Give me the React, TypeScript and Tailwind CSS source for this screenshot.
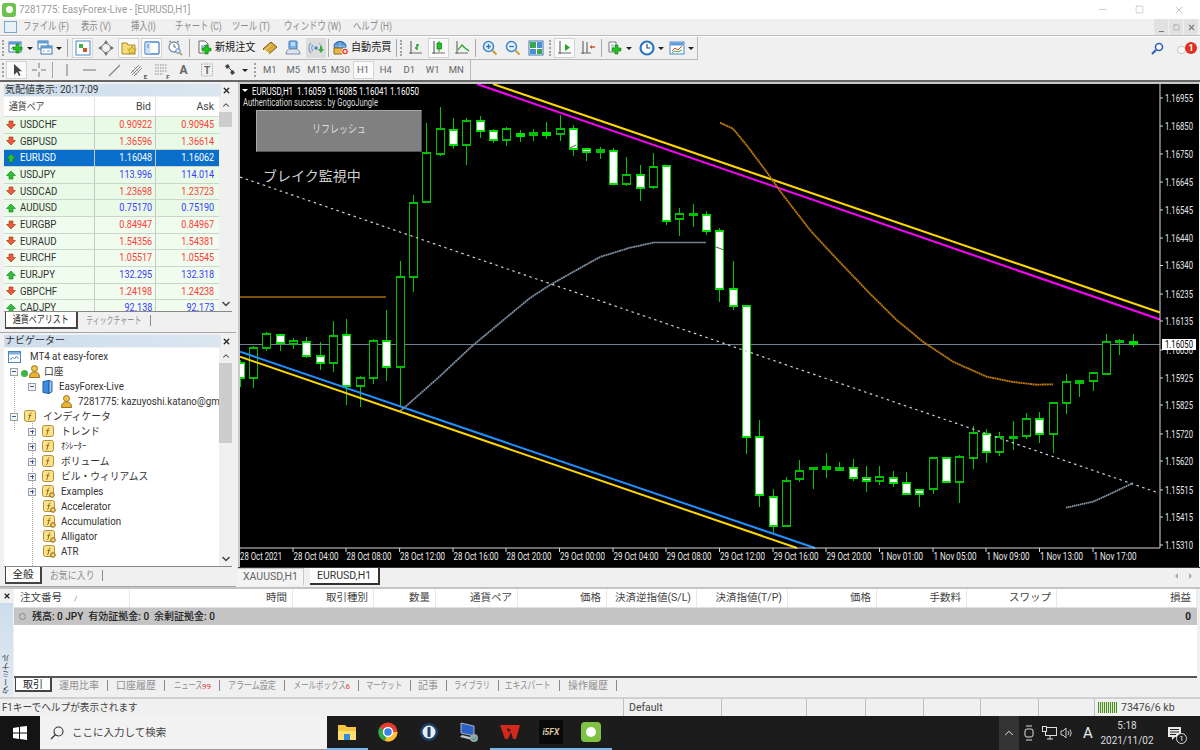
import React from "react";
import { ChevronUp, Minus, Square, X } from "lucide-react";

const uiFont = "font-['Roboto','Noto_Sans_CJK_JP',sans-serif]";

// i -> high, body top, body bottom, low, bearish (white body)
const candles: [number, number, number, number, number][] = [
  [360, 363, 378, 387, 1], [346, 348, 378, 388, 0], [332, 334, 348, 351, 0], [335, 335, 343, 351, 1],
  [338, 341, 344, 349, 0], [337, 342, 356, 358, 1], [342, 356, 363, 370, 1], [321, 336, 363, 372, 0],
  [319, 335, 386, 405, 1], [376, 378, 386, 407, 0], [339, 341, 378, 384, 0], [310, 341, 367, 381, 1],
  [261, 277, 367, 407, 0], [195, 203, 277, 292, 0], [123, 153, 202, 202, 0], [107, 129, 154, 156, 0],
  [118, 130, 145, 149, 1], [118, 121, 145, 165, 0], [116, 121, 131, 138, 1], [129, 131, 140, 143, 1],
  [127, 129, 140, 146, 0], [130, 134, 136, 142, 1], [129, 133, 135, 141, 0], [122, 133, 135, 139, 1],
  [115, 129, 134, 141, 0], [125, 129, 149, 156, 1], [149, 149, 152, 161, 1], [147, 150, 152, 159, 0],
  [148, 151, 184, 184, 1], [157, 175, 184, 186, 0], [165, 175, 188, 201, 1], [153, 167, 187, 189, 0],
  [165, 166, 221, 225, 1], [208, 214, 219, 236, 0], [204, 214, 215, 227, 0], [211, 215, 231, 235, 1],
  [228, 231, 289, 302, 1], [261, 289, 306, 310, 1], [306, 306, 437, 454, 1], [420, 437, 495, 507, 1],
  [489, 497, 526, 533, 1], [477, 481, 526, 527, 0], [460, 471, 479, 482, 0], [467, 468, 469, 489, 0],
  [453, 467, 469, 478, 0], [462, 468, 470, 471, 0], [459, 468, 478, 481, 1], [466, 478, 481, 492, 1],
  [466, 477, 481, 485, 0], [471, 478, 483, 487, 1], [472, 483, 494, 495, 1], [490, 490, 494, 507, 1],
  [457, 458, 489, 494, 0], [458, 458, 482, 483, 1], [455, 457, 482, 503, 0], [426, 433, 458, 469, 0],
  [429, 434, 452, 463, 1], [432, 437, 452, 456, 0], [421, 437, 438, 450, 0], [413, 419, 436, 439, 0],
  [412, 419, 434, 443, 1], [403, 403, 434, 453, 0], [374, 382, 403, 414, 0], [380, 381, 383, 397, 0],
  [373, 373, 381, 391, 0], [334, 342, 374, 375, 0], [339, 341, 342, 355, 0], [334, 342, 344, 347, 1],
];

const prices: [string, number][] = [
  ["1.16955", 98], ["1.16850", 126], ["1.16750", 154], ["1.16645", 182], ["1.16545", 210], ["1.16440", 238],
  ["1.16340", 265.5], ["1.16235", 294], ["1.16135", 321], ["1.16030", 350], ["1.15925", 378], ["1.15825", 405],
  ["1.15720", 434], ["1.15620", 461], ["1.15515", 490], ["1.15415", 517], ["1.15310", 545],
];

const times: [string, number, number][] = [
  ["28 Oct 2021", 239.6, 42], ["28 Oct 04:00", 293, 45], ["28 Oct 08:00", 346, 45], ["28 Oct 12:00", 399.6, 45], ["28 Oct 16:00", 453, 45],
  ["28 Oct 20:00", 506, 45], ["29 Oct 00:00", 559.5, 45], ["29 Oct 04:00", 613, 45], ["29 Oct 08:00", 666, 45], ["29 Oct 12:00", 719.5, 45],
  ["29 Oct 16:00", 773, 45], ["29 Oct 20:00", 826, 45], ["1 Nov 01:00", 879.5, 43], ["1 Nov 05:00", 933, 43], ["1 Nov 09:00", 986, 43],
  ["1 Nov 13:00", 1039.5, 43], ["1 Nov 17:00", 1093, 43],
];

const quotes: [string, string, string, number][] = [
  ["USDCHF", "0.90922", "0.90945", 0], ["GBPUSD", "1.36596", "1.36614", 0], ["EURUSD", "1.16048", "1.16062", 1],
  ["USDJPY", "113.996", "114.014", 1], ["USDCAD", "1.23698", "1.23723", 0], ["AUDUSD", "0.75170", "0.75190", 1],
  ["EURGBP", "0.84947", "0.84967", 0], ["EURAUD", "1.54356", "1.54381", 0], ["EURCHF", "1.05517", "1.05545", 0],
  ["EURJPY", "132.295", "132.318", 1], ["GBPCHF", "1.24198", "1.24238", 0], ["CADJPY", "92.138", "92.173", 1],
];

const termCols: [string, string][] = [
  ["注文番号", "w-[116px] text-left pl-[6px]"], ["時間", "w-[163px] text-right pr-[5px]"], ["取引種別", "w-[81px] text-right pr-[5px]"],
  ["数量", "w-[62px] text-right pr-[5px]"], ["通貨ペア", "w-[82px] text-right pr-[5px]"], ["価格", "w-[89px] text-right pr-[5px]"],
  ["決済逆指値(S/L)", "w-[90px] text-right pr-[5px]"], ["決済指値(T/P)", "w-[91px] text-right pr-[5px]"], ["価格", "w-[89px] text-right pr-[5px]"],
  ["手数料", "w-[90px] text-right pr-[5px]"], ["スワップ", "w-[90px] text-right pr-[5px]"], ["損益", "flex-1 text-right pr-[5px]"],
];

const Ic = ({ children, s = 16 }: { children: React.ReactNode; s?: number }) => (
  <svg width={s} height={s} viewBox="0 0 16 16" className="shrink-0">{children}</svg>
);

const Plus = ({ x = 8, y = 8 }: { x?: number; y?: number }) => (
  <path d={`M${x + 2} ${y}h3v3h3v3h-3v3h-3v-3h-3v-3h3z`} fill="#22c322" stroke="#0c7a0c" strokeWidth="0.6" />
);
const Win = ({ x = 1, y = 2, w = 12, h = 10 }: { x?: number; y?: number; w?: number; h?: number }) => (
  <g>
    <rect x={x} y={y} width={w} height={h} fill="#fff" stroke="#3f77b5" />
    <rect x={x} y={y} width={w} height={2.5} fill="#5d9ad6" />
  </g>
);
const Axis = () => <path d="M3 1v13M1 13h13M7 1v0" stroke="#6c6c6c" strokeWidth="1.2" fill="none" />;

const icons: Record<string, React.ReactNode> = {
  newChart: <Ic><Win /><path d="M3 9l2-2 2 1" stroke="#888" fill="none" /><Plus x={6} y={4} /></Ic>,
  profiles: <Ic><Win x={1} y={1} w={10} h={8} /><Win x={4} y={6} w={11} h={8} /><path d="M6 11h2M10 11h3" stroke="#8ab" /></Ic>,
  market: <Ic><rect x="1" y="1" width="14" height="14" fill="#fff" stroke="#4a86c5" /><rect x="4" y="4" width="4" height="4" fill="#3cb44a" /><rect x="8" y="8" width="4" height="4" fill="#d6532a" /></Ic>,
  move: <Ic><circle cx="8" cy="8" r="4.5" fill="none" stroke="#666" /><path d="M8 0l2 3H6zM8 16l-2-3h4zM0 8l3-2v4zM16 8l-3 2V6z" fill="#777" /></Ic>,
  nav: <Ic><path d="M1 3h5l1 2h7v9H1z" fill="#f7dd7a" stroke="#a98a2c" /><path d="M11 6l1.4 3 3 .3-2.3 2 .8 3-2.9-1.7L8 14.3l.8-3-2.3-2 3-.3z" fill="#f2cf46" stroke="#9b8128" strokeWidth=".6" /></Ic>,
  term: <Ic><rect x="1" y="2" width="14" height="12" rx="1" fill="#fff" stroke="#4a86c5" strokeWidth="1.3" /><rect x="1.5" y="2.5" width="5" height="11" fill="#cfe0f2" /><path d="M3 5h2M3 7h2" stroke="#4a86c5" /></Ic>,
  tester: <Ic><circle cx="7" cy="7" r="5" fill="#fff" stroke="#7a8fa8" strokeWidth="1.3" /><path d="M7 4v3h2" stroke="#667" fill="none" /><path d="M2 2l2-1M12 2l-2-1" stroke="#667" /><circle cx="11" cy="11" r="2.3" fill="#dfeaf5" stroke="#5585b5" /><path d="M13 13l2 2" stroke="#b38a2c" strokeWidth="1.6" /></Ic>,
  order: <Ic><path d="M2 1h6l3 3v9H2z" fill="#fff" stroke="#666" /><path d="M4 6h5M4 8h4" stroke="#4a86c5" /><Plus x={6} y={5} /></Ic>,
  book: <Ic><path d="M1 9l8-7 6 5-8 7z" fill="#d7a83a" stroke="#7b5a17" /><path d="M3 10l6-5" stroke="#f3d98a" /><path d="M2 10l5 4" stroke="#fff" strokeWidth="1.2" /></Ic>,
  vps: <Ic><rect x="4" y="1" width="8" height="8" rx="1" fill="#79b3e8" stroke="#3f77b5" /><path d="M6 3h4M6 5h4" stroke="#fff" /><path d="M1 14c0-3 2-5 4-5h6c2 0 4 2 4 5z" fill="#dbe4ee" stroke="#7d8fa3" /></Ic>,
  signal: <Ic><path d="M3 13a7 7 0 0 1 0-10M5 11a4.5 4.5 0 0 1 0-6" stroke="#7aa3c9" fill="none" strokeWidth="1.2" /><circle cx="8" cy="8" r="1.8" fill="#4a86c5" /><path d="M11 3a7 7 0 0 1 3 6" stroke="#7aa3c9" fill="none" /><path d="M10 9h2V6h2v3h2l-3 4z" fill="#37ad37" /></Ic>,
  auto: <Ic><ellipse cx="7" cy="6" rx="6" ry="4.5" fill="#4f94d4" stroke="#245d96" /><path d="M1.5 6h11M7 2v8" stroke="#bcd9f2" strokeWidth=".7" /><path d="M1 8h8v6H1z" fill="#e8b84a" stroke="#8c6a1c" /><circle cx="12" cy="11.5" r="3.4" fill="#e23a2c" stroke="#fff" /><rect x="10.7" y="10.3" width="2.6" height="2.4" fill="#fff" /></Ic>,
  bars: <Ic><Axis /><path d="M9 10V4M7 8h2M9 5h2" stroke="#1f9d1f" strokeWidth="1.4" fill="none" /></Ic>,
  candle: <Ic><Axis /><path d="M8 1v11" stroke="#1f9d1f" /><rect x="6" y="3" width="4.5" height="6" fill="#22c322" stroke="#0c7a0c" strokeWidth=".7" /></Ic>,
  line: <Ic><Axis /><path d="M4 10l4-5 3 3 4 3" stroke="#1f9d1f" strokeWidth="1.2" fill="none" /></Ic>,
  zoomIn: <Ic><circle cx="6.5" cy="6.5" r="5" fill="#e6f1fb" stroke="#3a86d0" strokeWidth="1.5" /><path d="M4 6.5h5M6.5 4v5" stroke="#3a76b5" strokeWidth="1.3" /><path d="M10.5 10.5l4 4" stroke="#c9a23b" strokeWidth="2.2" /></Ic>,
  zoomOut: <Ic><circle cx="6.5" cy="6.5" r="5" fill="#e6f1fb" stroke="#3a86d0" strokeWidth="1.5" /><path d="M4 6.5h5" stroke="#3a76b5" strokeWidth="1.3" /><path d="M10.5 10.5l4 4" stroke="#c9a23b" strokeWidth="2.2" /></Ic>,
  tile: <Ic><rect x="1" y="1" width="14" height="14" fill="#fff" stroke="#3f77b5" /><rect x="2" y="2" width="6" height="6" fill="#3aa84a" /><rect x="9" y="2" width="5" height="6" fill="#4a8fd8" /><rect x="2" y="9" width="6" height="5" fill="#4a8fd8" /><rect x="9" y="9" width="5" height="5" fill="#3aa84a" /></Ic>,
  scroll: <Ic><Axis /><path d="M8 4l5 3.5L8 11z" fill="#27a527" /></Ic>,
  shift: <Ic><path d="M3 1v13M1 13h10M7 2v11" stroke="#6c6c6c" strokeWidth="1.2" fill="none" /><path d="M10 7h5" stroke="#c9502a" strokeWidth="1.4" /><path d="M12 5l-2 2 2 2z" fill="#c9502a" /></Ic>,
  indic: <Ic><path d="M2 2h7v10H2z" fill="#fff" stroke="#777" /><path d="M4 5h3M4 7h3" stroke="#8ab" /><Plus x={6} y={5} /></Ic>,
  clock: <Ic><circle cx="8" cy="8" r="6.5" fill="#fff" stroke="#2b76c0" strokeWidth="2.2" /><path d="M8 4v4h3.5" stroke="#1d4e80" strokeWidth="1.2" fill="none" /></Ic>,
  tpl: <Ic><rect x="1" y="2" width="14" height="12" fill="#fff" stroke="#4a86c5" /><rect x="1.5" y="2.5" width="13" height="3" fill="#5d9ad6" /><path d="M3 11l3-3 3 2 4-4" stroke="#c9502a" fill="none" /><path d="M3 13l3-2 3 1 4-2" stroke="#3aa84a" fill="none" /></Ic>,
  cursor: <Ic><path d="M5 2v11l3-3 2 4 1.5-.8-2-3.9h3.5z" fill="#444" /></Ic>,
  cross: <Ic><path d="M8 1v5M8 10v5M1 8h5M10 8h5" stroke="#777" /></Ic>,
  vline: <Ic><path d="M8 2v12" stroke="#888" strokeWidth="1.2" /></Ic>,
  hline: <Ic><path d="M1 8h13" stroke="#888" strokeWidth="1.2" /></Ic>,
  trend: <Ic><path d="M3 14L14 3" stroke="#888" strokeWidth="1.2" /></Ic>,
  fibE: <Ic><path d="M2 11l8-8M3 13l9-9M5 14l8-8" stroke="#777" strokeWidth=".9" /><path d="M5 5l6 6M3 8l5 5" stroke="#777" strokeWidth=".7" strokeDasharray="1 1" /></Ic>,
  fibF: <Ic><path d="M2 3h12M2 6h12M2 9h12M2 12h8" stroke="#888" strokeDasharray="1.5 1" /></Ic>,
  boxT: <Ic><rect x="2.5" y="2" width="11" height="12" fill="none" stroke="#aaa" strokeDasharray="1.5 1" /></Ic>,
  shapes: <Ic><path d="M2 4l3-2 2 3-3 2zM7 10l3-2 2 3-3 2z" fill="#444" /><path d="M6 6l3 3" stroke="#444" /></Ic>,
  mt4: <svg width="13" height="12" viewBox="0 0 13 12" className="shrink-0"><rect x=".5" y=".5" width="12" height="11" fill="#fff" stroke="#4a86c5" /><rect x="1" y="1" width="11" height="2.5" fill="#7fb0e0" /><path d="M2.500 9l2-3 2 2 2-3 2 3" stroke="#5d8fc4" fill="none" /></svg>,
};

const FIcon = ({ gear }: { gear?: boolean }) => (
  <svg width="13" height="13" viewBox="0 0 13 13" className="shrink-0">
    <rect x=".5" y=".5" width="11" height="11" rx="2" fill="#fbe28a" stroke="#b48f3a" />
    <path d="M7.5 3C6 3 6 4 5.7 6L5.2 9c-.1.6-.5.7-1 .6M4.3 5.6h3" stroke="#8a6414" fill="none" strokeWidth=".9" />
    {gear && <circle cx="10" cy="10" r="2.3" fill="#f4cf6a" stroke="#8a6414" />}
  </svg>
);
const Person = () => (
  <svg width="13" height="13" viewBox="0 0 13 13" className="shrink-0">
    <circle cx="6.5" cy="3.5" r="3" fill="#f0c445" stroke="#98741c" />
    <path d="M1.5 12.5c0-4 2-5.5 5-5.5s5 1.500 5 5.500z" fill="#e7b532" stroke="#98741c" />
  </svg>
);
const Server = () => (
  <svg width="11" height="14" viewBox="0 0 11 14" className="shrink-0">
    <path d="M1 1.500L7 .5v13l-6-1z" fill="#3a8de0" stroke="#1f5fa3" />
    <path d="M7 .5l3 1v10l-3 2z" fill="#9dc9f2" stroke="#1f5fa3" />
  </svg>
);
const TreeBox = ({ open }: { open?: boolean }) => (
  <span className="w-[8px] h-[8px] border border-[#9aa0a8] bg-[#f4f4f4] flex items-center justify-center shrink-0 relative">
    <span className="block w-[4px] h-px bg-[#3a5a9a]" />
    {!open && <span className="absolute block h-[4px] w-px bg-[#3a5a9a]" />}
  </span>
);

const Caret = () => <span className="ml-[3px] w-0 h-0 border-x-[3px] border-x-transparent border-t-[3px] border-t-[#222] shrink-0" />;
const Sep = ({ w = "w-[6px]" }: { w?: string }) => (
  <div className={`${w} h-full flex justify-center py-[2px] shrink-0`}><span className="w-[2px] h-full border-l border-[#a8a8a8] border-r-white" /></div>
);
const Grip = () => (
  <div className="w-[6px] h-full flex justify-center py-[3px] shrink-0"><span className="w-[2px] h-full border-l-2 border-dotted border-[#a0a0a0]" /></div>
);
const Btn = ({ w, on, gray, children }: { w: string; on?: boolean; gray?: boolean; children: React.ReactNode }) => (
  <div className={`${w} h-full flex items-center justify-center shrink-0 py-[1px]`}>
    <div className={`h-full px-[2px] flex items-center justify-center ${on ? "bg-[#fafafa] border border-[#d4d4d4] w-[21px]" : ""} ${gray ? "bg-[#dcdcdc]" : ""}`}>{children}</div>
  </div>
);

const PanelTitle = ({ label }: { label: string }) => (
  <div className="h-[12px] flex items-center pl-[4px] pr-[4px] shrink-0">
    <div className="w-[217px] h-full bg-gradient-to-r from-[#cddcec] to-[#dbe6f0] text-[10px] leading-[12px] text-[#333] pl-[1px] whitespace-nowrap">{label}</div>
    <div className="flex-1 flex justify-center"><X size={9} strokeWidth={3.5} color="#222" /></div>
  </div>
);

const VScroll = ({ thumb }: { thumb: string }) => (
  <div className="w-[13px] h-full bg-[#f0f0f0] flex flex-col items-center shrink-0 relative">
    <ChevronUp size={10} strokeWidth={2.5} color="#444" className="mt-[3px]" />
    <div className={`${thumb} w-full bg-[#cdcdcd] mt-[2px]`} />
    <svg width="10" height="10" viewBox="0 0 10 10" className="absolute bottom-[2px]"><path d="M1.500 3l3.500 3.500L8.500 3" fill="none" stroke="#444" strokeWidth="1.500" /></svg>
  </div>
);

const Chart = () => {
  const px = (i: number) => Math.round(239.6 + 13.33 * i);
  return (
    <div className="relative w-[961px] h-[485px] bg-black border-l-2 border-t-2 border-[#c8c8c8] shrink-0 overflow-hidden">
      <svg width="961" height="485" viewBox="240 84 961 485" className={`absolute left-0 top-0 ${uiFont}`}>
        <path d="M240 344.500H1160" stroke="#708090" strokeWidth="1" />
        <path d="M240 297H386" stroke="#a8690c" strokeWidth="1.300" />
        <g shapeRendering="crispEdges">
          {candles.map((c, i) => {
            const x = px(i);
            const half = 4;
            return (
              <g key={i}>
                <path d={`M${x + 0.5} ${c[0]}V${c[3]}`} stroke="#00c800" strokeWidth="1" />
                <rect x={x - half + 0.5} y={c[1]} width={half * 2} height={Math.max(c[2] - c[1], 1)} fill={c[4] ? "#fff" : "#000"} stroke={c[4] ? "#00e000" : "#00c000"} strokeWidth="1.300" />
              </g>
            );
          })}
        </g>
        <path d="M570 148l6-3M716 247l8 3" stroke="#555" strokeWidth="1" />
        <path d="M240 177L1158 492.700" stroke="#d0d0d0" strokeWidth="1.200" strokeDasharray="2.500 3.500" />
        <path d="M493 84L1160 312.500" stroke="#ffd700" strokeWidth="2" />
        <path d="M477 84L1160 319.500" stroke="#ff00ff" strokeWidth="2" />
        <path d="M240 351.700L815 548" stroke="#1e90ff" strokeWidth="2" />
        <path d="M240 356.700L797 548" stroke="#ffd700" strokeWidth="2" />
        <path d="M400 411L405 407L438 378L471 347L501 322L530 298L550 285L573 272L600 257L630 247.700L653 242.700" stroke="#7b8fa0" strokeWidth="1.800" fill="none" strokeDasharray="2 .4" />
        <path d="M653 242.500H706" stroke="#708090" strokeWidth="1.500" />
        <path d="M1066 507.700L1093 501.700L1110 494L1133 483" stroke="#8a9ba8" strokeWidth="1.800" fill="none" strokeDasharray="1.500 .5" />
        <path d="M720 122.700L733 128.700L746.700 145.300L766.700 172L783 195L810 230L833 255L870 293.700L896.700 320L923 341.700L953 361.700L986.700 376.700L1013 382L1036.700 384.700L1053 384.300" stroke="#b8760b" strokeWidth="1.900" fill="none" strokeDasharray="2 .4" />
        <path d="M1160 84V548H240" stroke="#d8d8d8" strokeWidth="1" fill="none" />
        {prices.map(([t, y]) => (
          <g key={t}>
            <path d={`M1160 ${y}h3`} stroke="#d8d8d8" />
            <text x="1165" y={y + 3.500} fill="#e8e8e8" fontSize="10" textLength={28} lengthAdjust="spacingAndGlyphs">{t}</text>
          </g>
        ))}
        {times.map(([t, x, w]) => (
          <g key={t}>
            <path d={`M${x} 548v4`} stroke="#d8d8d8" />
            <text x={x + 0.500} y="560" fill="#e8e8e8" fontSize="10" textLength={w} lengthAdjust="spacingAndGlyphs">{t}</text>
          </g>
        ))}
        <rect x="1162" y="339" width="34" height="11" fill="#fff" />
        <text x="1165" y="348" fill="#000" fontSize="10" textLength={28} lengthAdjust="spacingAndGlyphs">1.16050</text>
        <path d="M242 89h6l-3 3z" fill="#fff" />
        <text x="252" y="94.500" fill="#fff" fontSize="10" textLength={167} lengthAdjust="spacingAndGlyphs" xmlSpace="preserve">EURUSD,H1  1.16059 1.16085 1.16041 1.16050</text>
        <text x="243" y="105.500" fill="#ddd" fontSize="10" textLength={135} lengthAdjust="spacingAndGlyphs">Authentication success : by GogoJungle</text>
      </svg>
      <div className="absolute left-[16px] top-[26px] w-[166px] h-[42px] bg-[#808080] border border-t-[#a8a8a8] border-l-[#a8a8a8] border-b-[#555] border-r-[#555] flex items-center justify-center text-[11px] text-[#dcdcdc] pb-[1px]">
        <span className="inline-block scale-x-[.82]">リフレッシュ</span>
      </div>
      <div className="absolute left-[23px] top-[82px] text-[14px] leading-[20px] text-[#cfcfcf] whitespace-nowrap">ブレイク監視中</div>
    </div>
  );
};

const TabLabel = ({ on, w, sq = "", children }: { on?: boolean; w: string; sq?: string; children: React.ReactNode }) => (
  <div className={`${w} h-full shrink-0 flex items-center justify-center whitespace-nowrap ${on ? "bg-white border-r-2 border-b-2 border-[#444] border-l text-[#222]" : "text-[#8e8e8e]"}`}>
    <span className={`inline-block ${sq}`}>{children}</span>
  </div>
);
const TabSep = () => <span className="w-px h-[11px] bg-[#888] shrink-0" />;

const termTabs: [string, string, string, string?][] = [
  ["運用比率", "w-[56px]", ""], ["口座履歴", "w-[57px]", ""], ["ニュース", "w-[55px]", "scale-x-[.72]", "99"], ["アラーム設定", "w-[65px]", "scale-x-[.8]"],
  ["メールボックス", "w-[74px]", "scale-x-[.75]", "6"], ["マーケット", "w-[52px]", "scale-x-[.72]"], ["記事", "w-[36px]", ""], ["ライブラリ", "w-[52px]", "scale-x-[.72]"],
  ["エキスパート", "w-[61px]", "scale-x-[.77]"], ["操作履歴", "w-[57px]", ""],
];

type NavRow = { label: string; icon: React.ReactNode; pad: string; box?: "open" | "closed"; small?: boolean; gap: string };
const navRows: NavRow[] = [
  { label: "MT4 at easy-forex", icon: icons.mt4, pad: "pl-[4px]", gap: "gap-[9px]" },
  { label: "口座", icon: <span className="flex shrink-0"><span className="w-[7px] h-[7px] rounded-full bg-[#39b54a] mt-[5px]" /><Person /></span>, pad: "pl-[6px]", box: "open", gap: "gap-[3px]" },
  { label: "EasyForex-Live", icon: <Server />, pad: "pl-[24px]", box: "open", gap: "gap-[6px]" },
  { label: "7281775: kazuyoshi.katano@gm", icon: <Person />, pad: "pl-[56px]", gap: "gap-[5px]" },
  { label: "インディケータ", icon: <FIcon />, pad: "pl-[6px]", box: "open", gap: "gap-[6px]" },
  { label: "トレンド", icon: <FIcon />, pad: "pl-[24px]", box: "closed", gap: "gap-[6px]" },
  { label: "ｵｼﾚｰﾀｰ", icon: <FIcon />, pad: "pl-[24px]", box: "closed", small: true, gap: "gap-[6px]" },
  { label: "ボリューム", icon: <FIcon />, pad: "pl-[24px]", box: "closed", gap: "gap-[6px]" },
  { label: "ビル・ウィリアムス", icon: <FIcon />, pad: "pl-[24px]", box: "closed", gap: "gap-[6px]" },
  { label: "Examples", icon: <FIcon gear />, pad: "pl-[24px]", box: "closed", gap: "gap-[6px]" },
  { label: "Accelerator", icon: <FIcon gear />, pad: "pl-[39px]", gap: "gap-[5px]" },
  { label: "Accumulation", icon: <FIcon gear />, pad: "pl-[39px]", gap: "gap-[5px]" },
  { label: "Alligator", icon: <FIcon gear />, pad: "pl-[39px]", gap: "gap-[5px]" },
  { label: "ATR", icon: <FIcon gear />, pad: "pl-[39px]", gap: "gap-[5px]" },
];

const Sidebar = () => (
  <div className="w-[236px] h-full flex flex-col shrink-0">
    <div className="h-[251px] flex flex-col pt-[2px] pb-[3px] border-b border-[#a8a8a8]">
      <PanelTitle label="気配値表示: 20:17:09" />
      <div className="flex-1 flex pl-[4px] pr-[4px] min-h-0 pt-[1px]">
        <div className="w-[215px] h-full bg-white overflow-hidden">
          <div className="h-[20px] flex text-[10.500px] text-[#444] border-b border-[#d8d8d8]">
            <div className="w-[91px] pl-[5px] leading-[19px] border-r border-[#e4e4e4]"><span className="inline-block origin-left scale-x-[.84]">通貨ペア</span></div>
            <div className="w-[61px] pr-[4px] text-right leading-[19px] border-r border-[#e4e4e4]">Bid</div>
            <div className="w-[62px] pr-[4px] text-right leading-[19px]">Ask</div>
          </div>
          {quotes.map((q, i) => (
            <div key={q[0]} className={`h-[16.670px] flex items-center border-b border-[#cdd4cd] text-[10.500px] ${i === 2 ? "bg-[#0a6ecb] text-white" : i < 6 ? "bg-[#e9fae6] text-[#333]" : "bg-[#f0fcee] text-[#333]"}`}>
              <div className="w-[91px] h-full flex items-center border-r border-[#c4cbc4]">
                <svg width="10" height="10" viewBox="0 0 10 10" className="ml-[2px] mr-[4px] shrink-0">
                  {q[3] ? <path d="M5 1l4.500 4.500H7V9H3V5.500H.5z" fill="#2fbf3a" stroke="#137a1c" strokeWidth=".6" /> : <path d="M5 9L.5 4.500H3V1h4v3.500h2.500z" fill="#ef5a3a" stroke="#a82a12" strokeWidth=".6" />}
                </svg>
                <span className="inline-block origin-left scale-x-[.92]">{q[0]}</span>
              </div>
              <div className={`w-[61px] h-full flex items-center justify-end pr-[3px] border-r border-[#c4cbc4] ${i === 2 ? "" : q[3] ? "text-[#3a3aff]" : "text-[#ff3a3a]"}`}><span className="inline-block origin-right scale-x-[.86]">{q[1]}</span></div>
              <div className={`w-[62px] h-full flex items-center justify-end pr-[4px] ${i === 2 ? "" : q[3] ? "text-[#3a3aff]" : "text-[#ff3a3a]"}`}><span className="inline-block origin-right scale-x-[.86]">{q[2]}</span></div>
            </div>
          ))}
        </div>
        <VScroll thumb="h-[15px]" />
      </div>
      <div className="h-[18px] flex items-center pl-[1px] mx-[4px] border-t border-[#888] text-[10.500px] shrink-0">
        <TabLabel on w="w-[73px]" sq="scale-x-[.76]">通貨ペアリスト</TabLabel>
        <TabLabel w="w-[72px]" sq="scale-x-[.66]">ティックチャート</TabLabel>
        <TabSep />
      </div>
    </div>
    <div className="flex-1 flex flex-col pt-[2px] pb-[2px] min-h-0 border-b border-[#a8a8a8]">
      <PanelTitle label="ナビゲーター" />
      <div className="flex-1 flex pl-[4px] pr-[4px] min-h-0 pt-[1px]">
        <div className="w-[215px] h-full bg-white overflow-hidden relative pt-[1px]">
          <span className="absolute left-[10px] top-[22px] h-[60px] border-l border-dotted border-[#aaa]" />
          <span className="absolute left-[28px] top-[70px] h-[160px] border-l border-dotted border-[#aaa]" />
          {navRows.map((r) => (
            <div key={r.label} className={`h-[15px] flex items-center text-[10.500px] text-[#333] whitespace-nowrap relative ${r.pad} ${r.gap}`}>
              {r.box && <TreeBox open={r.box === "open"} />}
              {r.icon}
              <span className={`inline-block origin-left scale-x-[.93] ${r.small ? "text-[9px]" : ""}`}>{r.label}</span>
            </div>
          ))}
        </div>
        <VScroll thumb="h-[80px]" />
      </div>
      <div className="h-[18px] flex items-center pl-[1px] mx-[4px] border-t border-[#888] text-[10.500px] shrink-0">
        <TabLabel on w="w-[37px]">全般</TabLabel>
        <TabLabel w="w-[60px]" sq="scale-x-[.85]">お気に入り</TabLabel>
        <TabSep />
      </div>
    </div>
  </div>
);

const menuItems: [string, string][] = [
  ["ファイル (F)", "w-[58px]"], ["表示 (V)", "w-[50px]"], ["挿入(I)", "w-[44px]"], ["チャート (C)", "w-[57px]"],
  ["ツール (T)", "w-[52px]"], ["ウィンドウ (W)", "w-[69px]"], ["ヘルプ (H)", "w-[45px]"],
];

const App = () => (
  <div className={`w-[1200px] h-[750px] overflow-hidden bg-[#f0f0f0] flex flex-col ${uiFont}`}>
    {/* title bar */}
    <div className="h-[19px] bg-white flex items-center shrink-0">
      <span className="w-[14px] h-[14px] ml-[2px] bg-[#6cc24a] rounded-[3px] flex items-center justify-center shrink-0"><span className="w-[7px] h-[7px] bg-white rounded-full" /></span>
      <span className="ml-[3px] text-[11.500px] text-[#9a9a9a] whitespace-nowrap inline-block origin-left scale-x-[.85]">7281775: EasyForex-Live - [EURUSD,H1]</span>
      <div className="ml-auto flex items-center text-[#8a8a8a]">
        <Minus size={11} strokeWidth={1} className="mr-[27px]" />
        <Square size={9} strokeWidth={1} className="mr-[29px]" />
        <X size={12} strokeWidth={1} className="mr-[15px]" />
      </div>
    </div>
    {/* menu bar */}
    <div className="h-[17px] flex items-center shrink-0 text-[11px] text-[#8c8c8c] border-b border-[#bcbcbc]">
      <span className="w-[13px] h-[12px] ml-[4px] border border-[#7aa6d2] bg-[#e8f1fa] shrink-0" />
      <div className="ml-[6px] flex items-center">
        {menuItems.map(([t, w]) => (
          <span key={t} className={`${w} shrink-0 whitespace-nowrap`}><span className="inline-block origin-left scale-x-[.76]">{t}</span></span>
        ))}
      </div>
      <div className="ml-auto h-full flex items-center text-[#7a7a7a]">
        <span className="w-[14px] h-full bg-[#e2e2e2] flex items-end justify-center pb-[3px]"><span className="w-[5px] h-px bg-[#777]" /></span>
        <span className="w-[14px] h-full bg-[#e2e2e2] ml-px flex items-center justify-center"><Square size={7} strokeWidth={1.500} /></span>
        <span className="w-[14px] h-full bg-[#e2e2e2] ml-px mr-[2px] flex items-center justify-center"><X size={9} strokeWidth={3} /></span>
      </div>
    </div>
    {/* toolbar 1 */}
    <div className="h-[24px] flex items-center shrink-0 border-t border-white">
      <div className="h-full flex items-center border-b border-r border-[#b8b8b8] pr-[1px] text-[11px] text-[#222]">
        <Grip />
        <Btn w="w-[28px]"><div className="flex items-center">{icons.newChart}<Caret /></div></Btn>
        <Btn w="w-[30px]"><div className="flex items-center">{icons.profiles}<Caret /></div></Btn>
        <Sep w="w-[7px]" />
        <Btn w="w-[23px]" on>{icons.market}</Btn>
        <Btn w="w-[23px]">{icons.move}</Btn>
        <Btn w="w-[23px]" on>{icons.nav}</Btn>
        <Btn w="w-[23px]" on>{icons.term}</Btn>
        <Btn w="w-[24px]">{icons.tester}</Btn>
        <Sep w="w-[6px]" />
        <div className="w-[66px] h-full flex items-center shrink-0 pl-[4px] gap-[2px]">{icons.order}<span className="whitespace-nowrap inline-block origin-left scale-x-[.92]">新規注文</span></div>
        <Btn w="w-[22px]">{icons.book}</Btn>
        <Btn w="w-[23px]">{icons.vps}</Btn>
        <Btn w="w-[24px]" gray>{icons.signal}</Btn>
        <Sep w="w-[2px]" />
        <div className="w-[66px] h-full flex items-center shrink-0 pl-[3px] gap-[2px]">{icons.auto}<span className="whitespace-nowrap inline-block origin-left scale-x-[.92]">自動売買</span></div>
        <Sep w="w-[2px]" />
        <Grip />
        <Btn w="w-[23px]">{icons.bars}</Btn>
        <Btn w="w-[23px]" on>{icons.candle}</Btn>
        <Btn w="w-[23px]">{icons.line}</Btn>
        <Sep w="w-[5px]" />
        <Btn w="w-[23px]">{icons.zoomIn}</Btn>
        <Btn w="w-[23px]">{icons.zoomOut}</Btn>
        <Btn w="w-[23px]">{icons.tile}</Btn>
        <Grip />
        <Btn w="w-[23px]" on>{icons.scroll}</Btn>
        <Btn w="w-[24px]">{icons.shift}</Btn>
        <Sep w="w-[3px]" />
        <Btn w="w-[33px]"><div className="flex items-center">{icons.indic}<Caret /></div></Btn>
        <Btn w="w-[30px]"><div className="flex items-center">{icons.clock}<Caret /></div></Btn>
        <Btn w="w-[30px]"><div className="flex items-center">{icons.tpl}<Caret /></div></Btn>
      </div>
      <div className="ml-auto flex items-center pr-[3px]">
        <svg width="14" height="14" viewBox="0 0 14 14" className="mr-[13px]"><circle cx="9" cy="5" r="3.500" fill="#fff" stroke="#2f5fc4" strokeWidth="1.600" /><path d="M6 8l-4 4" stroke="#2f5fc4" strokeWidth="2.200" /></svg>
        <div className="w-[20px] h-[14px] relative">
          <span className="absolute left-0 top-[4px] w-[9px] h-[8px] rounded-full border border-[#c4c4c4] bg-[#f8f8f8]" />
          <span className="absolute right-0 top-0 w-[12px] h-[12px] rounded-full bg-[#e0301e] text-white text-[9px] leading-[12px] text-center font-bold">1</span>
        </div>
      </div>
    </div>
    {/* toolbar 2 */}
    <div className="h-[22px] flex items-center shrink-0 border-b-2 border-[#666]">
      <div className="h-full flex items-center border-r border-[#b8b8b8] text-[9.500px] text-[#666]">
        <Grip />
        <Btn w="w-[21px]" on>{icons.cursor}</Btn>
        <Btn w="w-[23px]">{icons.cross}</Btn>
        <Sep w="w-[5px]" />
        <Btn w="w-[23px]">{icons.vline}</Btn>
        <Btn w="w-[24px]">{icons.hline}</Btn>
        <Btn w="w-[23px]">{icons.trend}</Btn>
        <Btn w="w-[24px]"><div className="relative">{icons.fibE}<span className="absolute -right-[2px] -bottom-[2px] text-[6px] leading-[6px] font-bold text-[#555]">E</span></div></Btn>
        <Btn w="w-[23px]"><div className="relative">{icons.fibF}<span className="absolute -right-[1px] -bottom-[2px] text-[6px] leading-[6px] font-bold text-[#555]">F</span></div></Btn>
        <Btn w="w-[23px]"><span className="text-[12px] font-bold text-[#666]">A</span></Btn>
        <Btn w="w-[24px]"><div className="relative flex items-center justify-center">{icons.boxT}<span className="absolute text-[10px] font-bold text-[#666]">T</span></div></Btn>
        <Btn w="w-[33px]"><div className="flex items-center">{icons.shapes}<Caret /></div></Btn>
        <Grip />
        {["M1", "M5", "M15", "M30"].map((t) => <Btn key={t} w="w-[23.500px]">{t}</Btn>)}
        <Btn w="w-[22px]" on>H1</Btn>
        {["H4", "D1", "W1", "MN"].map((t) => <Btn key={t} w="w-[23.500px]">{t}</Btn>)}
        <div className="w-[2px]" />
      </div>
    </div>
    {/* main area */}
    <div className="h-[505px] flex shrink-0">
      <Sidebar />
      <div className="w-[964px] flex flex-col pl-[2px]">
        <Chart />
        <div className="flex-1 flex items-start border-t border-[#333] text-[10.500px]">
          <div className="w-[66px] h-[17px] border-t border-r border-[#c8c8c8] flex items-center justify-center text-[#666] bg-[#f4f4f4]">XAUUSD,H1</div>
          <div className="w-[70px] h-[17px] ml-[6px] bg-white border-r-2 border-b-2 border-[#333] flex items-center justify-center text-[#333]">EURUSD,H1</div>
          <div className="ml-auto flex items-center gap-[11px] pr-[8px] pt-[5px]">
            <span className="w-0 h-0 border-y-[3px] border-y-transparent border-r-[3px] border-r-[#aaa]" />
            <span className="w-0 h-0 border-y-[3px] border-y-transparent border-l-[3px] border-l-[#aaa]" />
          </div>
        </div>
      </div>
    </div>
    {/* terminal */}
    <div className="h-[110px] flex shrink-0 border-t-2 border-[#c4c4c4] text-[10.500px] text-[#444]">
      <div className="w-[13px] h-full flex flex-col items-center shrink-0">
        <X size={8} strokeWidth={3.500} color="#222" className="mt-[3px]" />
        <div className="mt-[3px] flex-1 w-full bg-gradient-to-b from-[#cddcec] to-[#e4ebf2] flex items-end justify-center pb-[3px]">
          <span className="[writing-mode:vertical-rl] rotate-180 text-[8px] leading-[11px] text-[#333] whitespace-nowrap">ターミナル</span>
        </div>
      </div>
      <div className="flex-1 flex flex-col min-w-0 pl-px pr-[3px]">
        <div className="h-[19px] bg-white flex items-center border-b border-[#e0e0e0] shrink-0">
          {termCols.map(([t, c], i) => (
            <div key={i} className={`${c} h-full leading-[18px] border-r border-[#e8e8e8] whitespace-nowrap shrink-0`}>
              {t}{i === 0 && <span className="ml-[12px] text-[8px] text-[#888]">/</span>}
            </div>
          ))}
        </div>
        <div className="h-[17px] bg-[#c4c4c4] flex items-center text-[#222] font-medium pl-[5px] pr-[6px] shrink-0 text-[10px]">
          <span className="w-[7px] h-[7px] rounded-full border border-[#888] mr-[6px]" />
          <span className="whitespace-pre">残高: 0 JPY  有効証拠金: 0  余剰証拠金: 0</span>
          <span className="ml-auto font-bold">0</span>
        </div>
        <div className="flex-1 bg-white" />
        <div className="h-[16px] flex items-center border-t-2 border-[#555] shrink-0 text-[10px]">
          <div className="w-px" />
          <TabLabel on w="w-[37px]">取引</TabLabel>
          {termTabs.map(([t, w, sq, badge], i) => (
            <div key={i} className={`${w} h-full flex items-center justify-end shrink-0 whitespace-nowrap text-[#8e8e8e] gap-[8px]`}>
              <span className={`inline-block origin-right ${sq}`}>{t}</span>
              {badge && <span className="text-[8px] text-[#e23a3a] -ml-[8px] mt-[4px]">{badge}</span>}
              <TabSep />
            </div>
          ))}
        </div>
        <div className="h-[5px] shrink-0" />
      </div>
    </div>
    {/* status bar */}
    <div className="h-[19px] flex items-center shrink-0 border-t-2 border-[#d0d0d0] text-[10.500px] text-[#444] whitespace-nowrap">
      <div className="w-[623px] pl-[2px]"><span className="inline-block origin-left scale-x-[.92]">F1キーでヘルプが表示されます</span></div>
      <div className="w-[98px] border-l border-[#c0c0c0] h-full pl-[5px] leading-[17px]">Default</div>
      {["w-[85px]", "w-[59px]", "w-[58px]", "w-[57px]", "w-[58px]", "w-[56px]"].map((w, i) => <div key={i} className={`${w} border-l border-[#c0c0c0] h-full`} />)}
      <div className="flex-1 h-full border-l border-[#c0c0c0] flex items-center pl-[3px] gap-[4px]">
        <span className="w-[19px] h-[11px] shrink-0 bg-[repeating-linear-gradient(90deg,#3f8f2f_0,#3f8f2f_1px,#e8e8c8_1px,#e8e8c8_2px)]" />
        73476/6 kb
      </div>
    </div>
    {/* taskbar */}
    <div className="flex-1 bg-[#1c1c1c] flex items-stretch text-white min-h-0">
      <div className="w-[40px] flex items-center justify-center bg-[#141414] shrink-0">
        <svg width="14" height="14" viewBox="0 0 14 14"><path d="M0 2l6-1v5.500H0zM7 .8L14 0v6.500H7zM0 7.500h6V13l-6-1zM7 7.500h7V14l-7-1z" fill="#fff" /></svg>
      </div>
      <div className="w-[287px] bg-[#f2f2f2] flex items-center pl-[10px] gap-[8px] text-[#444] text-[10.500px] border-b border-[#999] shrink-0">
        <svg width="14" height="14" viewBox="0 0 14 14"><circle cx="8.500" cy="5.500" r="4.500" fill="none" stroke="#333" strokeWidth="1.100" /><path d="M5.300 8.800L1 13" stroke="#333" strokeWidth="1.200" /></svg>
        ここに入力して検索
      </div>
      <div className="flex items-stretch">
        {[
          <svg key="f" width="20" height="18" viewBox="0 0 20 18"><path d="M1 2h7l2 2h9v13H1z" fill="#f5c542" /><path d="M1 8h18v9H1z" fill="#ffdd70" /><path d="M7 11h6v6H7z" fill="#2f8fdc" /></svg>,
          <svg key="c" width="20" height="20" viewBox="0 0 20 20"><circle cx="10" cy="10" r="9.500" fill="#e53d30" /><path d="M10 10L1.500 5.500A9.500 9.500 0 0 0 7 19z" fill="#2ea84a" /><path d="M10 10h9.500A9.500 9.500 0 0 1 7 19z" fill="#fbc02d" /><circle cx="10" cy="10" r="4.500" fill="#3b82e6" stroke="#fff" strokeWidth="1.500" /></svg>,
          <svg key="o" width="20" height="20" viewBox="0 0 20 20"><circle cx="10" cy="10" r="9" fill="#1d3f66" /><circle cx="10" cy="10" r="6.500" fill="#e6edf4" /><rect x="8.500" y="5" width="3" height="10" rx="1" fill="#1d3f66" /></svg>,
          <svg key="p" width="22" height="22" viewBox="0 0 22 22"><path d="M3 2l13 3v10L3 12z" fill="#2a62c8" stroke="#ccd" strokeWidth=".8" /><path d="M4 14l12 3-2 2-12-3z" fill="#bcc4d0" /><circle cx="16" cy="17" r="4" fill="#9aa4a0" /><path d="M14 17l2 2 2-3" stroke="#2a8" fill="none" /></svg>,
          <svg key="w" width="22" height="16" viewBox="0 0 22 16"><path d="M1 1h20l-4 14h-3l-2-7-3 7H6z" fill="#d4281c" /><path d="M8 4l4 2-3 2z" fill="#1c1c1c" /></svg>,
          <span key="5" className="w-[24px] h-[24px] bg-[#0a0a0a] flex items-center justify-center text-[8.500px] italic font-bold text-[#d8c8a0]">i5FX</span>,
          <span key="g" className="w-[20px] h-[20px] bg-[#7dc243] rounded-[4px] flex items-center justify-center"><span className="w-[10px] h-[10px] bg-white rounded-full" /></span>,
        ].map((ic, i) => (
          <div key={i} className={`w-[40.700px] flex items-center justify-center border-b-2 ${i === 0 || i >= 4 ? "border-[#76b9ed]" : "border-transparent"}`}>{ic}</div>
        ))}
      </div>
      <div className="ml-auto flex items-stretch pr-[3px]">
        <div className="w-[20px] bg-[#333] flex items-center justify-center"><ChevronUp size={14} strokeWidth={1.500} /></div>
        <div className="w-[20px] flex items-center justify-center">
          <svg width="12" height="16" viewBox="0 0 12 16" fill="none" stroke="#ddd"><rect x="2" y="4" width="8" height="8" rx="2" /><path d="M3 1h6M3 15h6" /></svg>
        </div>
        <div className="w-[20px] flex items-center justify-center">
          <svg width="15" height="14" viewBox="0 0 15 14" fill="none" stroke="#ddd"><rect x="3.500" y="1.500" width="11" height="8" /><rect x=".5" y=".5" width="4" height="5" fill="#1c1c1c" /><path d="M5 13h6M8 10v3" /></svg>
        </div>
        <div className="w-[15px] flex items-center justify-center">
          <svg width="14" height="14" viewBox="0 0 14 14" fill="none" stroke="#ccc"><path d="M1 5h2l3-3v10L3 9H1z" /><path d="M8 5a3 3 0 0 1 0 4M10 3.500a6 6 0 0 1 0 7" /></svg>
        </div>
        <div className="w-[28px] flex items-center justify-center text-[15px] text-[#eee]">A</div>
        <div className="w-[50px] flex flex-col items-center justify-center text-[10px] leading-[15px] text-[#ddd] whitespace-nowrap">
          <span>5:18</span>
          <span>2021/11/02</span>
        </div>
        <div className="w-[45px] flex items-center justify-center relative">
          <svg width="16" height="15" viewBox="0 0 16 15"><path d="M1 1h13v10H8l-3 3v-3H1z" fill="#e8e8e8" /><path d="M3 3.500h9M3 6h9M3 8.500h6" stroke="#1c1c1c" /></svg>
          <span className="absolute right-[10px] bottom-[6px] w-[11px] h-[11px] rounded-full bg-[#1c1c1c] border border-[#ddd] text-[8px] leading-[9px] text-center">1</span>
        </div>
      </div>
    </div>
  </div>
);

export default App;
